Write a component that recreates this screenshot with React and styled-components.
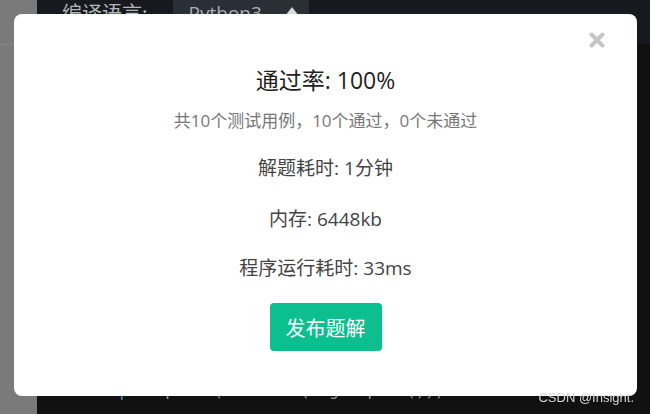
import React from 'react';
import styled, { createGlobalStyle } from 'styled-components';

const GlobalStyle = createGlobalStyle`
  html, body {
    margin: 0;
    padding: 0;
    width: 650px;
    height: 414px;
    overflow: hidden;
    background: #111111;
    font-family: "Open Sans", "Noto Sans CJK SC", sans-serif;
  }
  #root {
    height: 100%;
  }
`;

const Page = styled.div`
  display: flex;
  width: 650px;
  height: 414px;
`;

const SideStrip = styled.div`
  width: 37px;
  flex-shrink: 0;
  background: #7a7a7a;
  display: flex;
  flex-direction: column;

  .top {
    height: 44px;
    border-bottom: 1px solid #858585;
  }
`;

const Editor = styled.div`
  flex: 1;
  display: flex;
  flex-direction: column;
  background: #111111;
`;

const Toolbar = styled.div`
  height: 44px;
  background: #161a1f;
  display: flex;
  align-items: flex-start;
  padding-left: 25px;
  gap: 25px;
`;

const ToolLabel = styled.span`
  font-family: "Noto Sans CJK SC", sans-serif;
  font-size: 20px;
  line-height: 26px;
  color: #b4b6b8;
`;

const LangSelect = styled.div`
  width: 136px;
  height: 44px;
  background: #2a2f35;
  display: flex;
  align-items: flex-start;
  justify-content: space-between;
  padding: 0 10px 0 16px;
  box-sizing: border-box;
  font-size: 19px;
  line-height: 26px;
  color: #a9adb1;

  svg {
    margin-top: 7px;
  }
`;

const CodeArea = styled.div`
  flex: 1;
  display: flex;
  flex-direction: column;
  justify-content: flex-end;
  padding: 0 0 12px 80px;
  font-family: "DejaVu Sans Mono", monospace;
  font-size: 16px;
  line-height: 22px;
  color: #9a9a9a;
  white-space: pre;
`;

const Blue = styled.span`
  color: #4b8fd6;
`;

const Overlay = styled.div`
  position: fixed;
  left: 14px;
  top: 14px;
  width: 623px;
  height: 382px;
  background: #ffffff;
  border-radius: 8px;
  display: flex;
  flex-direction: column;
  align-items: center;
  box-sizing: border-box;
  padding-top: 50px;
`;

const CloseButton = styled.button`
  position: absolute;
  top: 15px;
  right: 29px;
  width: 22px;
  height: 22px;
  padding: 0;
  border: none;
  background: none;
  display: flex;
  align-items: center;
  justify-content: center;
  cursor: pointer;
`;

const Title = styled.h2`
  margin: 0;
  font-size: 23px;
  font-weight: 400;
  line-height: 32px;
  color: #1f1f1f;
`;

const Summary = styled.p`
  margin: 13px 0 0;
  font-size: 17px;
  line-height: 24px;
  color: #777777;
`;

const Stat = styled.p`
  margin: ${(p) => p.$gap}px 0 0;
  font-size: 19px;
  line-height: 26px;
  color: #444444;
`;

const PublishButton = styled.button`
  margin-top: 22px;
  width: 112px;
  height: 48px;
  border: none;
  border-radius: 4px;
  background: #0bbf8e;
  color: #ffffff;
  font-family: "Noto Sans CJK SC", sans-serif;
  font-size: 20px;
  cursor: pointer;
`;

const Watermark = styled.span`
  position: fixed;
  right: 16px;
  bottom: 9px;
  font-family: "Liberation Sans", sans-serif;
  font-size: 13px;
  color: #d6d6d6;
`;

const stats = [
  { label: '解题耗时: 1分钟', gap: 22 },
  { label: '内存: 6448kb', gap: 25 },
  { label: '程序运行耗时: 33ms', gap: 23 },
];

const App = () => {
  return (
    <>
      <GlobalStyle />
      <Page>
        <SideStrip>
          <div className="top" />
        </SideStrip>
        <Editor>
          <Toolbar>
            <ToolLabel>编译语言:</ToolLabel>
            <LangSelect>
              <span>Python3</span>
              <svg width="14" height="9" viewBox="0 0 14 9">
                <path d="M7 0 L14 9 L0 9 Z" fill="#d8d8d8" />
              </svg>
            </LangSelect>
          </Toolbar>
          <CodeArea>
            <span>
              <Blue>|</Blue>
              {'    print(solution(args.split()))'}
            </span>
          </CodeArea>
        </Editor>
      </Page>

      <Overlay>
        <CloseButton aria-label="关闭">
          <svg width="16" height="16" viewBox="0 0 16 16">
            <path
              d="M2.5 2.5 L13.5 13.5 M13.5 2.5 L2.5 13.5"
              stroke="#c6c6c6"
              strokeWidth="4"
              strokeLinecap="round"
            />
          </svg>
        </CloseButton>
        <Title>通过率: 100%</Title>
        <Summary>共10个测试用例，10个通过，0个未通过</Summary>
        {stats.map((s) => (
          <Stat key={s.label} $gap={s.gap}>
            {s.label}
          </Stat>
        ))}
        <PublishButton>发布题解</PublishButton>
      </Overlay>

      <Watermark>CSDN @Insight.</Watermark>
    </>
  );
};

export default App;
